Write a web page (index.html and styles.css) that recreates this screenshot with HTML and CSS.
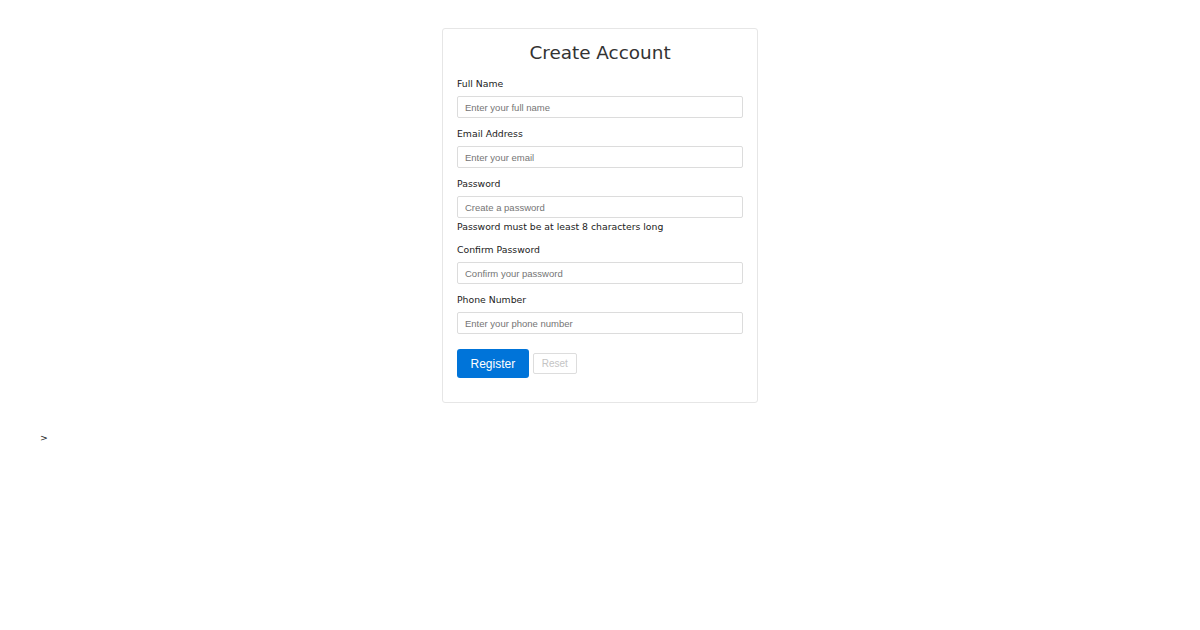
FILE: index.html
```html
<!DOCTYPE html>
<html lang="en">
<head>
<meta charset="utf-8">
<title>Create Account</title>
<link rel="stylesheet" href="styles.css">
</head>
<body>
<div class="page">
  <form class="card">
    <h1 class="title">Create Account</h1>
    <div class="group">
      <label class="label" for="name">Full Name</label>
      <input class="input" id="name" type="text" placeholder="Enter your full name">
    </div>
    <div class="group">
      <label class="label" for="email">Email Address</label>
      <input class="input" id="email" type="email" placeholder="Enter your email">
    </div>
    <div class="group">
      <label class="label" for="pw">Password</label>
      <input class="input" id="pw" type="password" placeholder="Create a password">
      <div class="hint">Password must be at least 8 characters long</div>
    </div>
    <div class="group">
      <label class="label" for="pw2">Confirm Password</label>
      <input class="input" id="pw2" type="password" placeholder="Confirm your password">
    </div>
    <div class="group">
      <label class="label" for="phone">Phone Number</label>
      <input class="input" id="phone" type="tel" placeholder="Enter your phone number">
    </div>
    <div class="actions">
      <button class="btn-primary" type="submit">Register</button>
      <button class="btn-reset" type="reset">Reset</button>
    </div>
  </form>
  <div class="stray">&gt;</div>
</div>
</body>
</html>
```

FILE: styles.css
```css
html, body {
  margin: 0;
  padding: 0;
  background: #ffffff;
}

body {
  font-family: "DejaVu Sans", sans-serif;
  color: #222;
}

.page {
  padding-top: 28px;
}

.card {
  box-sizing: border-box;
  width: 316px;
  margin: 0 auto;
  padding: 12px 14px 24px;
  border: 1px solid #e6e6e6;
  border-radius: 3px;
  background: #fff;
}

.title {
  margin: 0 0 12px;
  font-size: 18.4px;
  line-height: 24px;
  font-weight: 400;
  text-align: center;
  color: #333;
}

.group {
  margin-bottom: 9px;
}

.label {
  display: block;
  font-size: 9.3px;
  line-height: 14px;
  margin: 0 0 5px;
  color: #222;
}

.input {
  display: block;
  box-sizing: border-box;
  width: 100%;
  height: 22px;
  margin: 0;
  padding: 0 7px;
  border: 1px solid #dcdcdc;
  border-radius: 2px;
  font-family: "Liberation Sans", Arial, sans-serif;
  font-size: 9.5px;
  color: #333;
  background: #fff;
}

.input::placeholder {
  color: #757575;
}

.hint {
  font-size: 9.3px;
  line-height: 14px;
  margin: 2px 0 2px;
  color: #222;
}

.actions {
  display: flex;
  align-items: center;
  gap: 4px;
  margin-top: 15px;
}

.btn-primary {
  box-sizing: border-box;
  height: 29px;
  padding: 0 13.5px;
  border: none;
  border-radius: 3px;
  background: #0074d9;
  color: #fff;
  font-family: "Liberation Sans", Arial, sans-serif;
  font-size: 12px;
}

.btn-reset {
  box-sizing: border-box;
  height: 21px;
  padding: 0 8px;
  border: 1px solid #dddddd;
  border-radius: 2px;
  background: #fff;
  color: #c4c4c4;
  font-family: "Liberation Sans", Arial, sans-serif;
  font-size: 10px;
}

.stray {
  margin: 28px 0 0 40px;
  font-size: 9.3px;
  line-height: 14px;
  color: #222;
}
```
